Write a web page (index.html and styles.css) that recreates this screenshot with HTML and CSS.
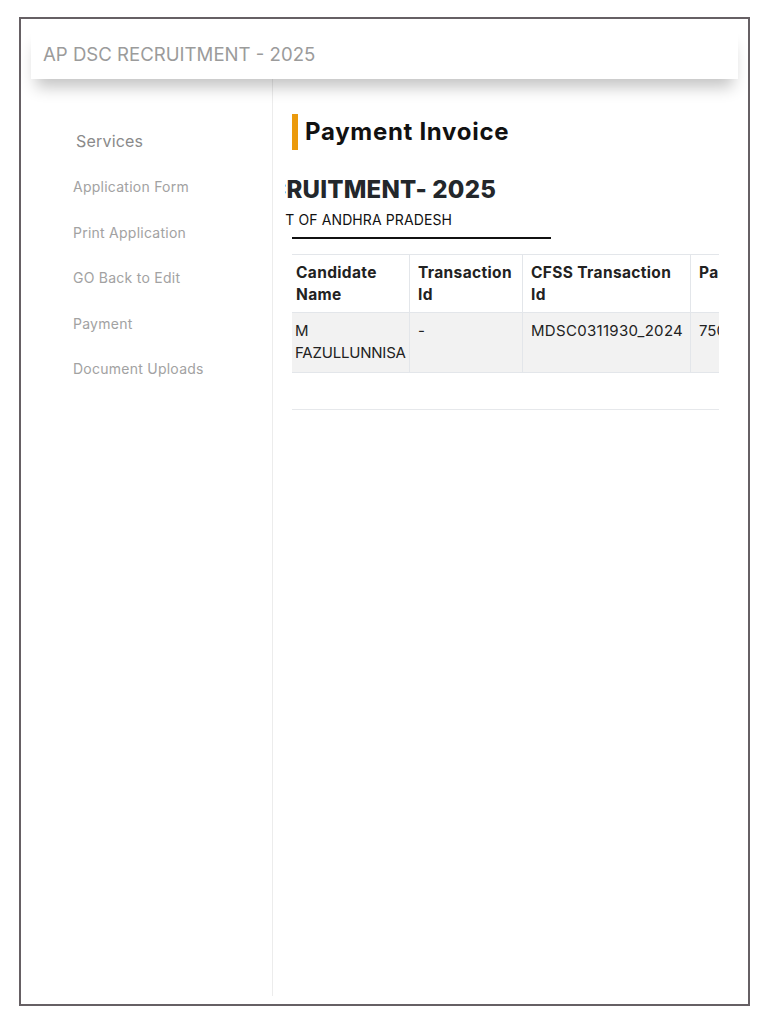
FILE: index.html
```html
<!DOCTYPE html>
<html lang="en">
<head>
<meta charset="utf-8">
<title>Payment Invoice - AP DSC Recruitment 2025</title>
<link rel="stylesheet" href="styles.css">
</head>
<body>
<div class="frame">
  <header class="topbar">
    <span class="brand">AP DSC RECRUITMENT - 2025</span>
  </header>
  <div class="layout">
    <aside class="sidebar">
      <div class="side-title">Services</div>
      <nav class="side-nav">
        <a href="#">Application Form</a>
        <a href="#">Print Application</a>
        <a href="#">GO Back to Edit</a>
        <a href="#">Payment</a>
        <a href="#">Document Uploads</a>
      </nav>
    </aside>
    <main class="content">
      <h1 class="page-title">Payment Invoice</h1>
      <section class="invoice">
        <div class="inv-head">
          <h2 class="inv-title"><span>AP DSC RECRUITMENT- 2025</span></h2>
          <p class="inv-sub"><span>GOVERNMENT OF ANDHRA PRADESH</span></p>
        </div>
        <div class="inv-rule"></div>
        <div class="table-wrap">
          <table class="inv-table">
            <colgroup>
              <col class="c-name">
              <col class="c-txn">
              <col class="c-cfss">
              <col class="c-amt">
            </colgroup>
            <thead>
              <tr>
                <th>Candidate Name</th>
                <th>Transaction Id</th>
                <th>CFSS Transaction Id</th>
                <th>Paid Amount</th>
              </tr>
            </thead>
            <tbody>
              <tr>
                <td class="name">M FAZULLUNNISA</td>
                <td>-</td>
                <td class="num">MDSC0311930_2024</td>
                <td>750</td>
              </tr>
            </tbody>
          </table>
        </div>
        <div class="inv-foot"></div>
      </section>
    </main>
  </div>
</div>
</body>
</html>
```

FILE: styles.css
```css
* { box-sizing: border-box; }

body {
  margin: 0;
  background: #ffffff;
  font-family: Inter, "Open Sans", "Liberation Sans", sans-serif;
}

.frame {
  margin: 17px 0 0 19px;
  width: 731px;
  height: 989px;
  border: 2px solid #666064;
  padding: 9px 10px 8px;
  display: flex;
  flex-direction: column;
  background: #fff;
}

/* top bar */
.topbar {
  height: 51px;
  flex: none;
  display: flex;
  align-items: center;
  padding-left: 12px;
  background: #fff;
  box-shadow: 0 13px 16px -5px rgba(0, 0, 0, 0.24);
  position: relative;
  z-index: 1;
}
.brand {
  font-size: 18.6px;
  color: #9b9b9b;
}

.layout {
  flex: 1;
  display: flex;
}

/* sidebar */
.sidebar {
  width: 242px;
  flex: none;
  border-right: 1px solid #ececec;
  padding: 50px 0 0 42px;
}
.side-title {
  font-size: 16px;
  color: #8a8a8a;
  padding-left: 3px;
  line-height: 24px;
  letter-spacing: 0.2px;
}
.side-nav {
  display: flex;
  flex-direction: column;
  margin-top: 12px;
}
.side-nav a {
  font-size: 14px;
  color: #a2a2a2;
  text-decoration: none;
  line-height: 20px;
  padding: 12px 0 13.6px;
  letter-spacing: 0.25px;
}

/* main column */
.content {
  flex: 1;
  padding: 35px 19px 0 19px;
  min-width: 0;
}
.page-title {
  margin: 0;
  height: 36px;
  border-left: 6px solid #eb9a0c;
  padding-left: 7px;
  font-size: 24px;
  font-weight: 700;
  line-height: 36px;
  color: #111;
  letter-spacing: 0.7px;
}

.invoice {
  margin-top: 24px;
  margin-left: -7px;
  overflow: hidden;
}
.inv-title,
.inv-sub {
  margin: 0;
  display: flex;
  justify-content: flex-end;
  white-space: nowrap;
}
.inv-title span,
.inv-sub span { flex: none; }
.inv-title {
  width: 211px;
  font-size: 24px;
  font-weight: 800;
  color: #23272b;
  line-height: 32px;
  letter-spacing: 0.2px;
}
.inv-sub {
  width: 167px;
  margin-top: 2px;
  font-size: 14px;
  color: #111;
  line-height: 24px;
  letter-spacing: 0.1px;
}
.inv-rule {
  margin: 5px 0 0 7px;
  width: 259px;
  height: 2px;
  background: #111;
}

.table-wrap {
  margin: 15px 0 0 7px;
  overflow: hidden;
}
.inv-table {
  margin-left: -5px;
  border-collapse: collapse;
  table-layout: fixed;
  width: 523px;
  font-size: 15px;
  color: #222;
}
.inv-table th,
.inv-table td {
  border: 1px solid #e3e6ea;
  padding: 7px 8px 6px;
  line-height: 22px;
  text-align: left;
  vertical-align: top;
}
.inv-table th {
  font-weight: 700;
  font-size: 15.5px;
  letter-spacing: 0.35px;
  background: #fff;
}
.inv-table td {
  background: #f2f2f2;
  padding-bottom: 8px;
}
.inv-table td.name {
  padding-left: 7px;
  letter-spacing: -0.2px;
}
.inv-table td.num { letter-spacing: 0.3px; }
.c-name { width: 122px; }
.c-txn { width: 113px; }
.c-cfss { width: 168px; }
.c-amt { width: 120px; }

.inv-foot {
  margin: 36px 0 0 7px;
  height: 1px;
  background: #e6e8eb;
}
```
